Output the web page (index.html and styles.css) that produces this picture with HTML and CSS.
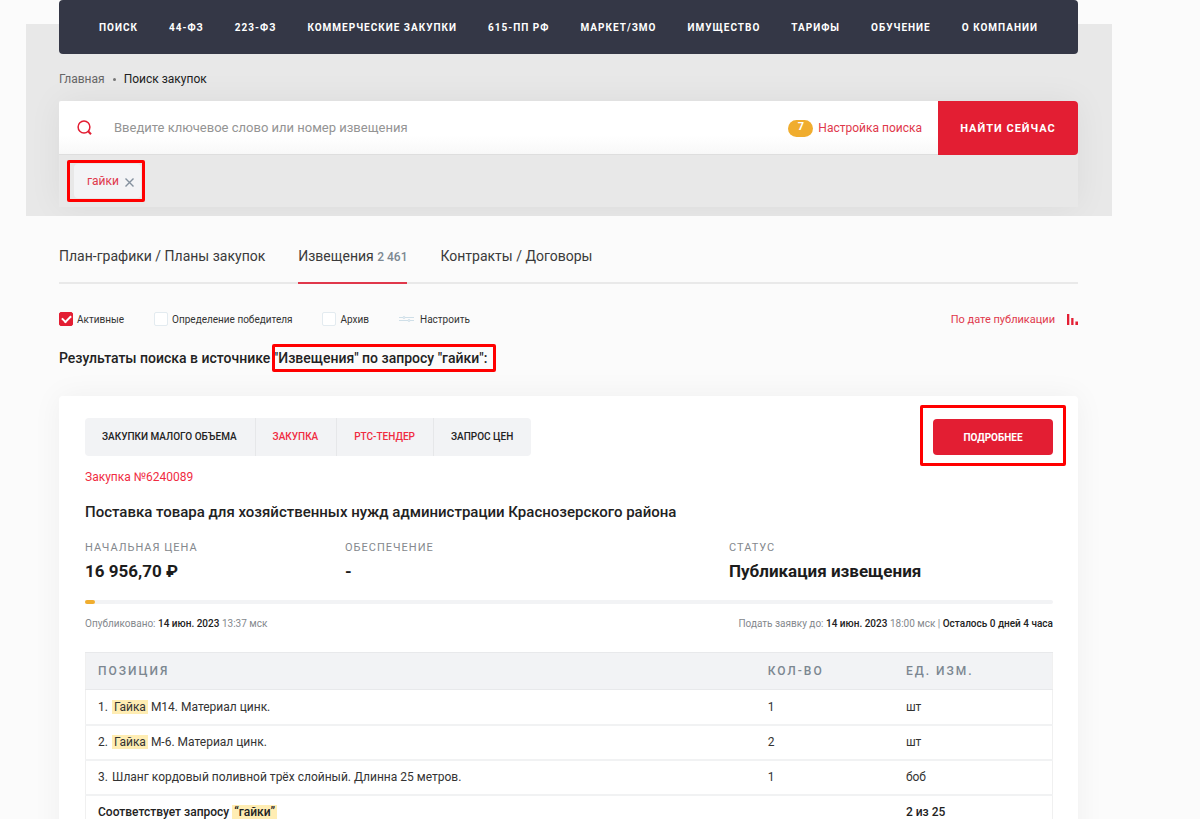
FILE: index.html
```html
<!DOCTYPE html>
<html lang="ru">
<head>
<meta charset="utf-8">
<title>Поиск закупок</title>
<meta name="viewport" content="width=device-width, initial-scale=1">
<link rel="stylesheet" href="styles.css">
</head>
<body>
<div class="page">
  <header class="hero">
    <nav class="nav">
      <a href="#">Поиск</a>
      <a href="#">44-ФЗ</a>
      <a href="#">223-ФЗ</a>
      <a href="#">Коммерческие закупки</a>
      <a href="#">615-ПП РФ</a>
      <a href="#">Маркет/ЗМО</a>
      <a href="#">Имущество</a>
      <a href="#">Тарифы</a>
      <a href="#">Обучение</a>
      <a href="#">О компании</a>
    </nav>
    <div class="crumbs">
      <a class="crumb-link" href="#">Главная</a>
      <span class="crumb-dot"></span>
      <span>Поиск закупок</span>
    </div>
    <form class="search">
      <div class="search-row">
        <label class="search-icon" for="query" aria-label="Поиск">
          <svg width="16" height="16" viewBox="0 0 16 16" fill="none" stroke="#e31e33" stroke-width="1.5"><circle cx="7" cy="7" r="5.9"/><path d="M11.2 11.200l2.800 3" stroke-width="2"/></svg>
        </label>
        <input class="search-input" id="query" type="text" placeholder="Введите ключевое слово или номер извещения">
        <a class="search-settings" href="#"><span class="count">7</span>Настройка поиска</a>
        <button class="search-button" type="button">Найти сейчас</button>
      </div>
      <div class="search-tags">
        <div class="mark-tag">
          <div class="tag">гайки
            <button class="tag-remove" type="button" aria-label="Удалить">
              <svg width="9" height="9" viewBox="0 0 9 9" stroke="#84919e" stroke-width="1.4"><path d="M.5.5l8 8M8.500.5l-8 8"/></svg>
            </button>
          </div>
        </div>
      </div>
    </form>
  </header>

  <main class="content">
    <div class="tabs">
      <a class="tab" href="#">План-графики / Планы закупок</a>
      <a class="tab tab-active" href="#">Извещения <span class="tab-count">2 461</span></a>
      <a class="tab" href="#">Контракты / Договоры</a>
    </div>

    <div class="filters">
      <label class="filter"><input class="check" type="checkbox" checked>Активные</label>
      <label class="filter"><input class="check" type="checkbox">Определение победителя</label>
      <label class="filter"><input class="check" type="checkbox">Архив</label>
      <button class="adjust" type="button">
        <svg width="15" height="6" viewBox="0 0 15 6" fill="#f5f9fb" stroke="#cfdfe8" stroke-width="1"><path d="M0 1.500h15M0 4.500h15"/><circle cx="5" cy="1.500" r="1"/><circle cx="10" cy="4.500" r="1"/></svg>
        Настроить
      </button>
      <a class="sort" href="#">По дате публикации
        <svg width="11" height="11" viewBox="0 0 11 11" fill="#e31e33"><path d="M0 0h2.300v11H0zM4.200 4h2.300v7H4.200zM8.400 7.500H11V11H8.400z"/></svg>
      </a>
    </div>

    <h2 class="results">Результаты поиска в источнике <span class="marked">"Извещения" по запросу "гайки":</span></h2>

    <article class="card">
      <div class="card-top">
        <div class="badges">
          <span class="badge">Закупки малого объема</span>
          <a class="badge badge-red" href="#">Закупка</a>
          <a class="badge badge-red" href="#">РТС-Тендер</a>
          <span class="badge">Запрос цен</span>
        </div>
        <div class="marked marked-button"><button class="more" type="button">Подробнее</button></div>
      </div>
      <a class="card-number" href="#">Закупка №6240089</a>
      <h3 class="card-title">Поставка товара для хозяйственных нужд администрации Краснозерского района</h3>
      <dl class="facts">
        <div><dt>Начальная цена</dt><dd>16 956,70 ₽</dd></div>
        <div><dt>Обеспечение</dt><dd>-</dd></div>
        <div><dt>Статус</dt><dd>Публикация извещения</dd></div>
      </dl>
      <div class="bar"><div class="bar-fill" style="width:1%"></div></div>
      <div class="dates">
        <span>Опубликовано: <b>14 июн. 2023</b> 13:37 мск</span>
        <span>Подать заявку до: <b>14 июн. 2023</b> 18:00 мск | <b>Осталось 0 дней 4 часа</b></span>
      </div>
      <table class="items">
        <thead>
          <tr><th class="col-name">Позиция</th><th class="col-qty">Кол-во</th><th>Ед. изм.</th></tr>
        </thead>
        <tbody>
          <tr><td><span class="num">1.</span><mark>Гайка</mark> М14. Материал цинк.</td><td>1</td><td>шт</td></tr>
          <tr><td><span class="num">2.</span><mark>Гайка</mark> М-6. Материал цинк.</td><td>2</td><td>шт</td></tr>
          <tr><td><span class="num">3.</span>Шланг кордовый поливной трёх слойный. Длинна 25 метров.</td><td>1</td><td>боб</td></tr>
          <tr class="total"><td>Соответствует запросу <mark>“гайки”</mark></td><td></td><td>2 из 25</td></tr>
        </tbody>
      </table>
    </article>
  </main>
</div>
</body>
</html>
```

FILE: styles.css
```css
* { box-sizing: border-box; }
body {
  margin: 0;
  height: 100vh;
  overflow: hidden;
  background: #fbfbfb;
  color: #222;
  font-family: Roboto, "Liberation Sans", sans-serif;
  font-size: 12px;
}
a { color: inherit; text-decoration: none; }
button, input { font-family: inherit; }
button { border: 0; padding: 0; background: none; color: inherit; cursor: pointer; }
svg { display: block; flex: none; }

.page { padding: 24px 88px 0 26px; }
.hero {
  display: flex;
  flex-direction: column;
  padding: 0 34px 9px 33px;
  background: #e8e8e8;
}

.nav {
  display: flex;
  align-items: center;
  justify-content: space-between;
  height: 54px;
  margin-top: -24px;
  padding: 0 40px;
  border-radius: 4px;
  background: #343746;
  color: #fff;
  font-size: 10px;
  font-weight: 700;
  letter-spacing: 1px;
  text-transform: uppercase;
  white-space: nowrap;
}

.crumbs {
  display: flex;
  align-items: flex-start;
  gap: 8px;
  height: 47px;
  padding-top: 17px;
  line-height: 16px;
}
.crumb-link { color: #666; }
.crumb-dot { width: 3px; height: 3px; margin-top: 7px; border-radius: 50%; background: #777; }

.search { box-shadow: 0 0 32px rgba(0, 0, 0, .06); }
.search-row { display: flex; height: 54px; background: linear-gradient(#fff 65%, #f8f8f8); border-bottom: 1px solid #dedede; border-radius: 2px 4px 4px 0; }
.search-icon { display: flex; align-items: center; padding: 0 21px 0 18px; }
.search-input { flex: 1; min-width: 0; border: 0; padding: 0; background: none; outline: 0; font-size: 13px; color: #222; }
.search-input::placeholder { color: #949494; opacity: 1; }
.search-settings { display: flex; align-items: center; gap: 5px; padding-right: 16px; color: #e0384b; white-space: nowrap; }
.count { width: 25px; height: 17px; margin-top: 2px; border-radius: 9px; background: #f0ad2e; color: #fff; font-weight: 700; font-size: 11px; line-height: 14px; text-align: center; }
.search-button { width: 140px; margin-bottom: -1px; border-radius: 0 4px 4px 0; background: #e31e33; color: #fff; font-size: 11px; font-weight: 700; letter-spacing: 1px; text-transform: uppercase; }
.search-tags { display: flex; padding: 5px 8px; background: #e8e8e8; }
.mark-tag { padding: 1px 1px 1px 4px; border: 3px solid #f00; border-radius: 2px; }
.tag { display: flex; align-items: center; gap: 6px; height: 34px; padding: 0 7px 0 13px; border-radius: 4px; background: #f3f4f6; color: #e0384b; }
.tag-remove { margin-top: 2px; }

.content { position: relative; padding: 30px 34px 0 33px; background: #fbfbfb; }
.tabs { display: flex; gap: 33px; border-bottom: 2px solid #e9e9e9; color: #3a3a3a; font-size: 14px; line-height: 20px; }
.tab { padding-bottom: 15px; margin-bottom: -2px; border-bottom: 2px solid transparent; }
.tab-active { border-color: #e0384b; }
.tab-count { color: #7c8791; font-size: 12px; font-weight: 500; }

.filters { display: flex; align-items: center; height: 20px; margin-top: 25px; gap: 30px; font-size: 10px; color: #333; }
.filter { display: flex; align-items: center; gap: 4px; }
.check { appearance: none; width: 14px; height: 14px; margin: 0; border: 1px solid #e3ebf0; border-radius: 2px; background: #fff; }
.check:checked { display: grid; place-items: center; border-color: #e31e33; background: #e31e33; }
.check:checked::after { content: ""; width: 7px; height: 4px; margin-bottom: 2px; border: solid #fff; border-width: 0 0 2px 2px; transform: rotate(-45deg); }
.adjust { display: flex; align-items: center; gap: 6px; font-size: 10px; }
.sort { display: flex; align-items: center; gap: 12px; margin-left: auto; color: #e0384b; font-size: 11px; }

.results { margin: 19px 0 0; font-size: 14px; font-weight: 500; line-height: 20px; }
.marked { position: relative; }
.marked::after { content: ""; position: absolute; inset: -6px -9px -6px -2px; border: 3px solid #f00; border-radius: 2px; pointer-events: none; }
.marked-button::after { inset: -14px -13px -11px; }

.card { margin-top: 28px; padding: 22px 25px 26px 26px; border-radius: 4px; background: #fff; box-shadow: 0 0 30px rgba(0, 0, 0, .05); }
.card-top { display: flex; justify-content: space-between; align-items: center; }
.badges { display: flex; border-radius: 4px; background: #f2f3f5; font-size: 10px; font-weight: 500; line-height: 38px; text-transform: uppercase; }
.badge { padding: 0 18px 0 17px; border-right: 1px solid #e6e7e9; }
.badge:last-child { border-right: 0; }
.badge-red, .card-number { color: #f02b3f; }
.more { display: block; width: 120px; height: 36px; border-radius: 4px; background: #e31e33; color: #fff; font-size: 10px; font-weight: 700; text-transform: uppercase; }
.card-number { display: block; margin-top: 13px; line-height: 16px; }
.card-title { margin: 15px 0 0; font-size: 15px; font-weight: 500; line-height: 24px; }

.facts { display: grid; grid-template-columns: 260fr 384fr 324fr; margin: 16px 0 0; }
.facts dt { color: #84888d; font-size: 11px; line-height: 16px; letter-spacing: 1px; text-transform: uppercase; }
.facts dd { margin: 4px 0 0; color: #1c1c1c; font-size: 17px; font-weight: 700; line-height: 22px; }
.bar { height: 4px; margin-top: 18px; border-radius: 2px; background: #f2f3f5; }
.bar-fill { height: 4px; border-radius: 2px; background: #f0ad2e; }
.dates { display: flex; justify-content: space-between; margin-top: 12px; color: #84888d; font-size: 10px; line-height: 16px; }
.dates b { color: #222; font-weight: 500; }

.items { width: 100%; margin-top: 20px; border-collapse: collapse; table-layout: fixed; border: 1px solid #f0f0f0; font-size: 12px; color: #333; }
.items th, .items td { padding: 0 12px; text-align: left; line-height: 16px; }
.items th { height: 37px; border: solid #e8e9eb; border-width: 1px 0; background: #f2f3f5; color: #7c8791; font-weight: 500; letter-spacing: 2px; text-transform: uppercase; }
.items td { height: 35px; border-bottom: 2px solid #f1f2f3; }
.items .col-name { width: 69.3%; }
.items .col-qty { width: 14.3%; }
.num { display: inline-block; width: 14px; }
.items mark { padding: 0 2px; background: #ffedb3; color: inherit; }
.total { font-weight: 500; color: #222; }
```
